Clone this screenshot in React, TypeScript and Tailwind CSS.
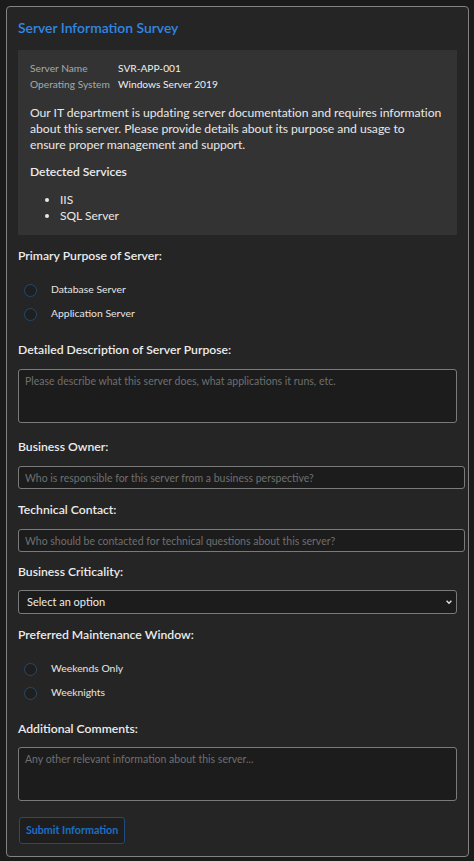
import { useState } from "react";

const font = { fontFamily: 'Lato, "Open Sans", sans-serif' };

const Radio = ({ name, label }: { name: string; label: string }) => (
  <label className="flex h-[24px] items-center pl-[6px] text-[10.4px] text-[#e6e6e6]">
    <input type="radio" name={name} className="peer sr-only" />
    <span className="h-[13px] w-[13px] rounded-full border border-[#234a70] bg-[#1f1f1f]" />
    <span className="ml-[14px]">{label}</span>
  </label>
);

const Label = ({ children, className = "" }: { children: string; className?: string }) => (
  <div className={`text-[12.2px] font-semibold leading-[16px] text-[#ececec] ${className}`}>{children}</div>
);

const field =
  "rounded-[3px] border border-[#7a7a7a] bg-[#1c1c1c] px-[6px] text-[10.5px] text-[#e6e6e6] placeholder:text-[#6f6f6f] outline-none";

export default function App() {
  const [crit, setCrit] = useState("");

  return (
    <div className="min-h-[861px] bg-[#1b1b1b] pt-[6px] pb-[4px]" style={font}>
      <div className="ml-[6px] w-[463px] rounded-[4px] border border-[#828282] bg-[#252525] px-[11px] pt-[11px] pb-[12px]">
        <h1 className="text-[13.9px] font-semibold leading-[20px] text-[#3088e3]">Server Information Survey</h1>

        <div className="mt-[12px] bg-[#333333] pl-[12px] pr-[4px] pt-[10px] pb-[11px]">
          <div className="grid grid-cols-[88px_1fr] text-[10.2px] leading-[16px]">
            <span className="text-[#a9a9a9]">Server Name</span>
            <span className="text-[#f0f0f0]">SVR-APP-001</span>
            <span className="text-[#a9a9a9]">Operating System</span>
            <span className="text-[#f0f0f0]">Windows Server 2019</span>
          </div>
          <p className="mt-[13px] text-[12.2px] leading-[16px] tracking-[-0.05px] text-[#e8e8e8]">
            Our IT department is updating server documentation and requires information
            <br />
            about this server. Please provide details about its purpose and usage to
            <br />
            ensure proper management and support.
          </p>
          <div className="mt-[11px] text-[12.1px] font-semibold leading-[16px] text-[#ececec]">Detected Services</div>
          <ul className="mt-[12px] list-disc pl-[30px] text-[12px] leading-[16px] text-[#e8e8e8]">
            <li>IIS</li>
            <li>SQL Server</li>
          </ul>
        </div>

        <Label className="mt-[13px]">Primary Purpose of Server:</Label>
        <div className="mt-[14px]">
          <Radio name="purpose" label="Database Server" />
          <Radio name="purpose" label="Application Server" />
        </div>

        <Label className="mt-[16px]">Detailed Description of Server Purpose:</Label>
        <textarea
          placeholder="Please describe what this server does, what applications it runs, etc."
          className={`mt-[11px] block h-[54px] w-full resize-none py-[4px] ${field}`}
        />

        <Label className="mt-[16px]">Business Owner:</Label>
        <input
          placeholder="Who is responsible for this server from a business perspective?"
          className={`mt-[11px] block h-[23px] w-[447px] ${field}`}
        />

        <Label className="mt-[13px]">Technical Contact:</Label>
        <input
          placeholder="Who should be contacted for technical questions about this server?"
          className={`mt-[11px] block h-[23px] w-[447px] ${field}`}
        />

        <Label className="mt-[12px]">Business Criticality:</Label>
        <div className="relative mt-[10px]">
          <select
            value={crit}
            onChange={(e) => setCrit(e.target.value)}
            className="block h-[24px] w-full appearance-none rounded-[3px] border border-[#7a7a7a] bg-[#1c1c1c] pl-[8px] text-[11px] text-[#ececec] outline-none"
          >
            <option value="">Select an option</option>
            <option value="low">Low</option>
            <option value="medium">Medium</option>
            <option value="high">High</option>
            <option value="critical">Critical</option>
          </select>
          <svg
            viewBox="0 0 10 10"
            className="pointer-events-none absolute right-[4px] top-[8px] h-[8px] w-[8px]"
            fill="none"
            stroke="#e0e0e0"
            strokeWidth="1.8"
          >
            <path d="M2 3.5 L5 6.5 L8 3.5" />
          </svg>
        </div>

        <Label className="mt-[13px]">Preferred Maintenance Window:</Label>
        <div className="mt-[14px]">
          <Radio name="window" label="Weekends Only" />
          <Radio name="window" label="Weeknights" />
        </div>

        <Label className="mt-[16px]">Additional Comments:</Label>
        <textarea
          placeholder="Any other relevant information about this server..."
          className={`mt-[10px] block h-[54px] w-full resize-none py-[4px] ${field}`}
        />

        <button className="mt-[16px] ml-[1px] block h-[27px] rounded-[3px] border border-[#1f4c7c] bg-[#1e1e1e] px-[6px] text-[10.7px] font-bold text-[#1d6fc6]">
          Submit Information
        </button>
      </div>
    </div>
  );
}
